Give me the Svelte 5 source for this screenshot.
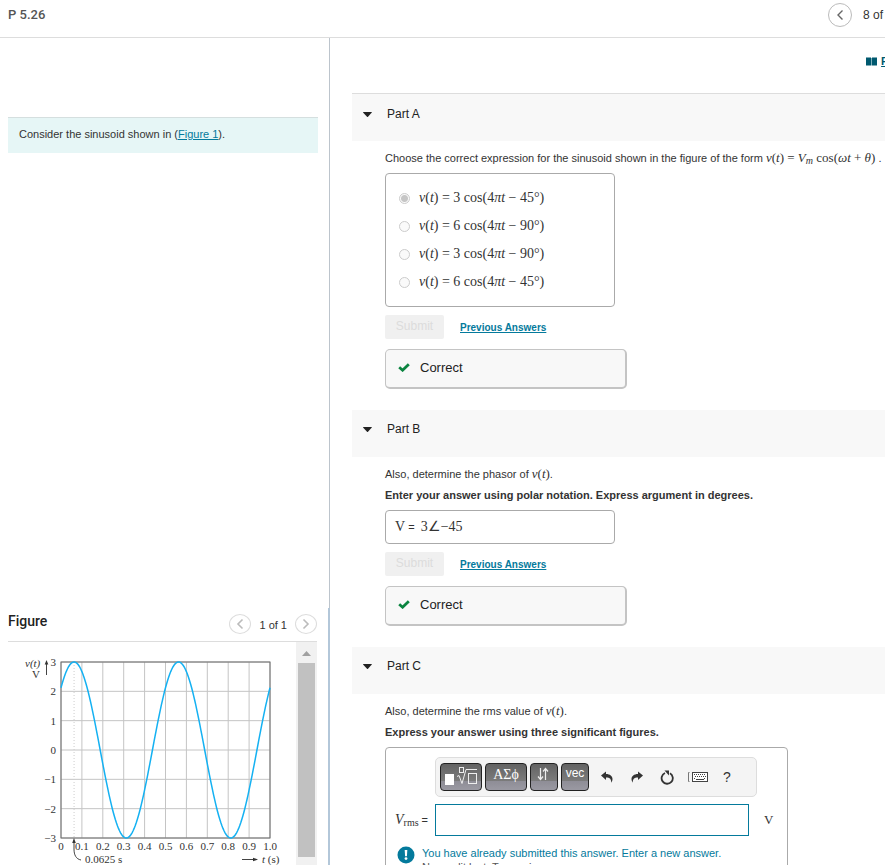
<script lang="ts">
  const choices = [
    { amp: 3, phase: 45 },
    { amp: 6, phase: 90 },
    { amp: 3, phase: 90 },
    { amp: 6, phase: 45 }
  ];

  // Plot area of the figure
  const left = 53;
  const top = 20;
  const width = 209;
  const height = 176;

  const px = (t: number) => left + t * width;
  const py = (v: number) => top + ((3 - v) / 6) * height;

  const xTicks = Array.from({ length: 11 }, (_, i) => i / 10);
  const yTicks = [3, 2, 1, 0, -1, -2, -3];

  // v(t) = 3 cos(4πt − 45°)
  const curve = Array.from({ length: 201 }, (_, i) => {
    const t = i / 200;
    const v = 3 * Math.cos(4 * Math.PI * t - Math.PI / 4);
    return `${px(t).toFixed(2)},${py(v).toFixed(2)}`;
  }).join(' ');

  let selected = $state(0);
  let answer = $state('');
</script>

{#snippet vt()}
  <span class="math"><i>v</i>(<i>t</i>)</span>
{/snippet}

{#snippet partHeader(name: string)}
  <h2 class="part-header">
    <button class="toggle" type="button" aria-expanded="true">
      <svg width="9" height="5" viewBox="0 0 9 5" aria-hidden="true"><path d="M0 0.5Q0 0 .5 0h8q.5 0 .3.6L5 4.7q-.5.5-1 0z" fill="#222" /></svg>
      {name}
    </button>
  </h2>
{/snippet}

{#snippet result()}
  <div class="actions">
    <button class="submit" type="button" disabled>Submit</button>
    <a class="previous" href="#previous">Previous Answers</a>
  </div>
  <div class="feedback">
    <svg width="12" height="9" viewBox="0 0 12 9" aria-hidden="true"><path d="M1.2 4.2 4.6 7.2 10.8 1.2" fill="none" stroke="#0b8440" stroke-width="2.8" /></svg>
    <span>Correct</span>
  </div>
{/snippet}

<div class="page">
  <header class="topbar">
    <h1>P 5.26</h1>
    <nav class="pager">
      <button class="round" type="button" aria-label="Previous item">
        <svg width="8" height="12" viewBox="0 0 8 12"><path d="M6.5 1.5 2 6l4.5 4.5" fill="none" stroke="#666" stroke-width="1.4" /></svg>
      </button>
      <span>8 of</span>
    </nav>
  </header>

  <main class="columns">
    <aside class="left">
      <div class="prompt-area">
        <p class="prompt">Consider the sinusoid shown in (<a href="#figure">Figure 1</a>).</p>
      </div>

      <section class="figure" id="figure">
        <div class="figure-head">
          <h2>Figure</h2>
          <div class="figure-nav">
            <button class="round small" type="button" aria-label="Previous figure">
              <svg width="8" height="12" viewBox="0 0 8 12"><path d="M6.5 1.5 2 6l4.5 4.5" fill="none" stroke="#bbb" stroke-width="1.6" /></svg>
            </button>
            <span>1 of 1</span>
            <button class="round small" type="button" aria-label="Next figure">
              <svg width="8" height="12" viewBox="0 0 8 12"><path d="M1.5 1.5 6 6l-4.5 4.5" fill="none" stroke="#bbb" stroke-width="1.6" /></svg>
            </button>
          </div>
        </div>

        <div class="figure-body">
          <svg class="chart" width="288" height="223" viewBox="0 0 288 223" role="img" aria-label="Plot of v(t)">
            {#each xTicks as t}
              <line x1={px(t)} x2={px(t)} y1={top} y2={top + height} stroke="#c4c4c4" />
            {/each}
            {#each yTicks as v}
              <line x1={left} x2={left + width} y1={py(v)} y2={py(v)} stroke="#c4c4c4" />
              <text x="48" y={py(v) + 4} text-anchor="end">{v < 0 ? '−' + -v : v}</text>
            {/each}
            {#each xTicks as t, i}
              <text x={px(t)} y="208" text-anchor="middle">{i === 0 ? '0' : t.toFixed(1)}</text>
            {/each}
            <line x1={px(0.0625)} x2={px(0.0625)} y1={top} y2={top + height} stroke="#ccc" stroke-dasharray="1 2" />
            <rect x={left} y={top} {width} {height} fill="none" stroke="#6b6b6b" />
            <polyline points={curve} fill="none" stroke="#14b1f2" stroke-width="1.5" />

            <text x="17" y="25" font-style="italic">v(t)</text>
            <text x="24" y="36">V</text>
            <path d="M38.5 33V22" stroke="#444" fill="none" />
            <path d="m38.5 18 1.8 4.5h-3.6z" fill="#333" />

            <path d="M66 199v8c0 6 2 10 7 11" stroke="#444" fill="none" />
            <path d="m66 196 1.8 5h-3.6z" fill="#333" />
            <text x="77" y="221">0.0625 s</text>

            <path d="M234 217.5h12" stroke="#444" fill="none" />
            <path d="m250 217.5-5-1.8v3.6z" fill="#333" />
            <text x="254" y="221"><tspan font-style="italic">t</tspan> (s)</text>
          </svg>
          <div class="scrollbar">
            <svg width="9" height="5" viewBox="0 0 9 5" aria-hidden="true"><path d="M0 5 4.5 0 9 5z" fill="#a0a0a0" /></svg>
            <div class="thumb"></div>
          </div>
        </div>
      </section>
    </aside>

    <div class="right">
      <div class="review">
        <svg width="11" height="9" viewBox="0 0 11 9" aria-hidden="true"><path d="M0 .5h5v8H0zM6 .5h5v8H6z" fill="#00596f" /><path d="M5 1h1v7.5H5z" fill="#7fb0bc" /></svg>
        <a href="#review">Review</a>
      </div>

      <section class="part first">
        {@render partHeader('Part A')}
        <div class="part-body">
          <p class="question">
            Choose the correct expression for the sinusoid shown in the figure of the form
            <span class="math"><i>v</i>(<i>t</i>) = <i>V</i><sub><i>m</i></sub> cos(<i>ωt</i> + <i>θ</i>)</span> .
          </p>
          <fieldset class="box choices">
            {#each choices as choice, i}
              <label>
                <input type="radio" name="expression" value={i} bind:group={selected} disabled />
                <span class="math"><i>v</i>(<i>t</i>) = {choice.amp} cos(4<i>πt</i> − {choice.phase}°)</span>
              </label>
            {/each}
          </fieldset>
          {@render result()}
        </div>
      </section>

      <section class="part">
        {@render partHeader('Part B')}
        <div class="part-body">
          <p class="question">Also, determine the phasor of {@render vt()}.</p>
          <p class="instruction">Enter your answer using polar notation. Express argument in degrees.</p>
          <div class="box given">
            <span class="math">V</span> = <span class="math value">3∠−45</span>
          </div>
          {@render result()}
        </div>
      </section>

      <section class="part">
        {@render partHeader('Part C')}
        <div class="part-body">
          <p class="question">Also, determine the rms value of {@render vt()}.</p>
          <p class="instruction">Express your answer using three significant figures.</p>
          <div class="box entry">
            <div class="toolbar">
              <button class="key wide" type="button" aria-label="Templates">
                <svg width="34" height="20" viewBox="0 0 34 20">
                  <rect x="1" y="7" width="9" height="11" fill="#fff" />
                  <g fill="none" stroke="#eee">
                    <rect x="15.5" y=".5" width="4" height="5" />
                    <path d="M13 9.5l2-1 3 8L22 2.500H33" />
                    <rect x="24.5" y="6.500" width="8" height="10" />
                  </g>
                </svg>
              </button>
              <button class="key wide greek" type="button">ΑΣϕ</button>
              <button class="key" type="button" aria-label="Arrows">
                <svg width="14" height="14" viewBox="0 0 14 14"><path d="M3.5 1v11M1 9.5 3.5 12.5 6 9.5M8.500 13V2M6 4.500 8.500 1.500 11 4.500" fill="none" stroke="#eee" stroke-width="1.2" /></svg>
              </button>
              <button class="key vec" type="button">vec</button>
              <div class="tools">
                <button class="tool" type="button" aria-label="Undo">
                  <svg width="12" height="12" viewBox="0 0 12 12"><path d="M0 4.5 5 .5v2.6c4 0 6.5 2.2 6.5 5 0 1.5-.5 2.6-1.5 3.7.6-3.4-1-5.3-5-5.3v2.4z" fill="#333" /></svg>
                </button>
                <button class="tool" type="button" aria-label="Redo">
                  <svg width="12" height="12" viewBox="0 0 12 12"><path d="M12 4.5 7 .5v2.6c-4 0-6.5 2.2-6.5 5 0 1.5.5 2.6 1.5 3.7-.6-3.4 1-5.3 5-5.3v2.4z" fill="#333" /></svg>
                </button>
                <button class="tool" type="button" aria-label="Reset">
                  <svg width="14" height="15" viewBox="0 0 14 15"><path d="M10 3.300A5.600 5.600 0 1 1 5 3" fill="none" stroke="#333" stroke-width="1.800" /><path d="M4.500.5H9v5z" fill="#333" /></svg>
                </button>
                <button class="tool" type="button" aria-label="Keyboard shortcuts">
                  <svg width="21" height="12" viewBox="0 0 21 12"><path d="M2.5 1.5h-1v9h1" fill="none" stroke="#777" /><rect x="5.5" y="1.5" width="15" height="9" fill="#fff" stroke="#444" /><path d="M7 3.5h12M8 5.5h11M7 7.5h2M17 7.5h2" stroke="#444" stroke-dasharray="1 1" /><path d="M9 8.5h8" stroke="#444" /></svg>
                </button>
                <button class="tool help" type="button" aria-label="Help">?</button>
              </div>
            </div>
            <div class="answer-row">
              <label for="vrms"><span class="math"><i>V</i><sub>rms</sub></span> = </label>
              <input id="vrms" type="text" autocomplete="off" bind:value={answer} />
              <span class="unit">V</span>
            </div>
            <div class="alert">
              <svg width="18" height="18" viewBox="0 0 18 18" aria-hidden="true"><circle cx="9" cy="9" r="8.5" fill="#047a9c" /><path d="M7.7 4h2.6l-.4 6.2H8.1z" fill="#fff" /><circle cx="9" cy="12.6" r="1.4" fill="#fff" /></svg>
              <p>You have already submitted this answer. Enter a new answer.<br /><span>No credit lost. Try again.</span></p>
            </div>
          </div>
        </div>
      </section>
    </div>
  </main>
</div>

<style>
  :global(body) {
    margin: 0;
    background: #fff;
  }

  .page {
    display: flex;
    flex-direction: column;
    height: 100vh;
    overflow: hidden;
    font-family: 'Liberation Sans', Arial, sans-serif;
    font-size: 11px;
    color: #333;
  }

  h1, h2, p {
    margin: 0;
  }

  button {
    font-family: inherit;
    cursor: pointer;
  }

  a {
    color: #047a9c;
  }

  /* Top bar */
  .topbar {
    display: flex;
    justify-content: space-between;
    flex: none;
    box-sizing: border-box;
    height: 38px;
    padding-left: 8px;
    border-bottom: 1px solid #ddd;
    overflow: hidden;
  }

  h1 {
    padding-top: 6px;
    font: 500 13px/17px Roboto, sans-serif;
    color: #555;
  }

  .pager {
    display: flex;
    align-items: flex-start;
    gap: 11px;
    width: 57px;
    padding-top: 3px;
    font-size: 12px;
    line-height: 25px;
    white-space: nowrap;
  }

  .round {
    display: flex;
    flex: none;
    align-items: center;
    justify-content: center;
    width: 24px;
    height: 24px;
    padding: 0;
    border: 1px solid #bbb;
    border-radius: 50%;
    background: #fff;
  }

  .round.small {
    width: 22px;
    height: 20px;
    border-color: #ddd;
  }

  .columns {
    display: flex;
    flex: 1;
    min-height: 0;
  }

  /* Left column */
  .left {
    display: flex;
    flex-direction: column;
    flex: 0 0 330px;
    box-sizing: border-box;
  }

  .prompt-area {
    flex: 1;
    padding: 79px 11px 0 8px;
    border-right: 1px solid #bcc4cc;
  }

  .prompt {
    padding: 9px 11px 12px;
    border-top: 1px solid #d5dfdf;
    background: #e6f6f6;
    line-height: 14px;
  }

  .figure {
    padding: 0 11px 0 8px;
    border-right: 2px solid #b3c7d9;
  }

  .figure-head {
    display: flex;
    justify-content: space-between;
    height: 33px;
    border-bottom: 1px solid #ddd;
  }

  .figure-head h2 {
    padding-top: 5px;
    font: 500 14px/17px Roboto, sans-serif;
    color: #222;
  }

  .figure-nav {
    display: flex;
    align-items: flex-start;
    gap: 8px;
    padding-top: 6px;
    line-height: 22px;
  }

  .figure-body {
    display: flex;
    justify-content: space-between;
  }

  .chart {
    display: block;
    font-family: 'Liberation Serif', 'Times New Roman', serif;
    font-size: 11px;
    fill: #333;
  }

  .scrollbar {
    display: flex;
    flex-direction: column;
    align-items: center;
    flex: 0 0 21px;
    gap: 7px;
    box-sizing: border-box;
    padding: 9px 2px 8px;
    background: #f1f1f1;
  }

  .thumb {
    flex: 1;
    width: 17px;
    background: #c1c1c1;
  }

  /* Right column */
  .right {
    flex: 1;
    min-width: 0;
    overflow: hidden;
    padding-left: 22px;
  }

  .review {
    display: flex;
    align-items: center;
    justify-content: flex-end;
    gap: 4px;
    height: 46px;
    margin-right: -36px;
    padding-right: 2px;
    padding-bottom: 9px;
  }

  .review a {
    font-weight: bold;
    color: #00596f;
  }

  .part {
    margin-bottom: 21px;
  }

  .part-header {
    height: 47px;
    background: #f8f8f8;
  }

  .first .part-header {
    height: 46px;
    padding-top: 1px;
    border-top: 1px solid #ddd;
  }

  .toggle {
    display: flex;
    align-items: center;
    gap: 15px;
    width: 100%;
    height: 38px;
    padding: 0 11px;
    border: 0;
    background: none;
    font-size: 12px;
    color: #222;
  }

  .part-body {
    padding: 6px 0 0 33px;
  }

  .question {
    height: 20px;
    line-height: 22px;
    white-space: nowrap;
  }

  .instruction {
    padding: 4px 0 6px;
    font-weight: bold;
    line-height: 17px;
  }

  .math {
    font-family: 'Liberation Serif', 'Times New Roman', serif;
    font-size: 14px;
    white-space: pre;
  }

  .question .math {
    font-size: 13px;
  }

  .math sub {
    font-size: 10px;
    line-height: 0;
    vertical-align: -2px;
  }

  .box {
    box-sizing: border-box;
    width: 230px;
    border: 1px solid #aaa;
    border-radius: 4px;
    background: #fff;
  }

  .choices {
    margin: 6px 0 0;
    padding: 10px 12px;
  }

  .choices label {
    display: flex;
    align-items: center;
    gap: 9px;
    height: 28px;
  }

  .choices input {
    appearance: none;
    flex: none;
    box-sizing: border-box;
    width: 11px;
    height: 11px;
    margin: 0 0 0 1px;
    border: 1px solid #ccc;
    border-radius: 50%;
    background: #fafafa;
  }

  .choices input:checked {
    background: radial-gradient(circle, #c6c6c6 3px, #fafafa 4px);
  }

  .given {
    padding: 0 9px;
    line-height: 31px;
  }

  .value {
    margin-left: 3px;
  }

  .actions {
    display: flex;
    align-items: center;
    gap: 16px;
    margin: 8px 0 10px;
  }

  .submit {
    width: 59px;
    height: 24px;
    padding: 0 0 2px;
    border: 0;
    border-radius: 2px;
    background: #f0f0f0;
    font-size: 12px;
    color: #dcdcdc;
  }

  .previous {
    font-size: 10px;
    font-weight: bold;
  }

  .feedback {
    display: flex;
    align-items: center;
    gap: 10px;
    box-sizing: border-box;
    width: 242px;
    height: 40px;
    padding: 0 12px 2px;
    border: 1px solid #c4c4c4;
    border-right-width: 2px;
    border-bottom-width: 2px;
    border-radius: 5px;
    background: #f8f8f8;
    font-size: 13px;
    color: #222;
  }

  /* Part C answer entry */
  .entry {
    width: 403px;
    padding: 9px 9px 20px;
  }

  .toolbar {
    display: flex;
    align-items: center;
    gap: 3px;
    box-sizing: border-box;
    width: 322px;
    height: 40px;
    margin-left: 40px;
    padding: 0 4px;
    border: 1px solid #ddd;
    border-radius: 5px;
    background: #f4f4f4;
  }

  .key {
    display: flex;
    align-items: flex-start;
    justify-content: center;
    flex: none;
    box-sizing: border-box;
    width: 28px;
    height: 28px;
    padding: 3px 0 0;
    border: 1px solid #222;
    border-radius: 4px;
    background: linear-gradient(#636363 0, #7b7b7b 64%, #8e8d96 65%, #9a99a2 100%);
    color: #fff;
  }

  .key.wide {
    width: 42px;
  }

  .key svg {
    flex: none;
  }

  .greek {
    font: 14px/16px 'Liberation Serif', 'Times New Roman', serif;
  }

  .vec {
    font-size: 12px;
    line-height: 12px;
  }

  .tools {
    display: flex;
    align-items: center;
  }

  .tool {
    display: flex;
    justify-content: center;
    width: 30px;
    padding: 0;
    border: 0;
    background: none;
    color: #333;
  }

  .help {
    font-size: 14px;
  }

  .answer-row {
    display: flex;
    align-items: center;
    margin-top: 7px;
  }

  .answer-row label {
    flex: 0 0 40px;
    white-space: nowrap;
  }

  .answer-row input {
    box-sizing: border-box;
    width: 314px;
    height: 32px;
    padding: 0 6px;
    border: 1px solid #047a9c;
    outline: none;
    font: 14px 'Liberation Serif', 'Times New Roman', serif;
  }

  .unit {
    margin-left: 15px;
    font: 13px 'Liberation Serif', 'Times New Roman', serif;
  }

  .alert {
    display: flex;
    gap: 7px;
    margin-top: 10px;
    padding-left: 2px;
    color: #047a9c;
  }

  .alert p {
    line-height: 14px;
  }

  .alert span {
    color: #555;
  }
</style>
